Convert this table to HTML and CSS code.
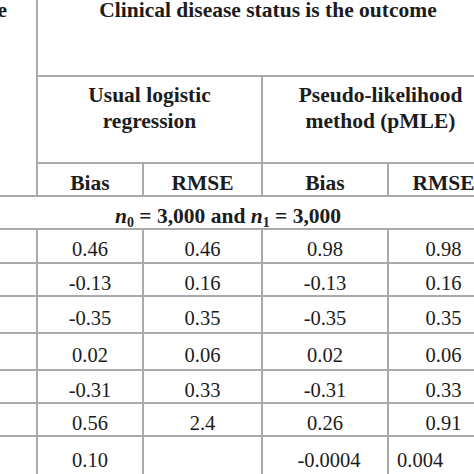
FILE: index.html
```html
<!DOCTYPE html>
<html>
<head>
<meta charset="utf-8">
<link rel="stylesheet" href="styles.css">
</head>
<body>
<table class="tbl">
  <colgroup>
    <col class="c0"><col class="c1"><col class="c2"><col class="c3"><col class="c4">
  </colgroup>
  <tr class="r-h1">
    <th class="lab" rowspan="3"><div class="lab-in">Estimate</div></th>
    <th class="top" colspan="4">Clinical disease status is the outcome</th>
  </tr>
  <tr class="r-h2">
    <th class="method" colspan="2">Usual logistic<br>regression</th>
    <th class="method" colspan="2">Pseudo-likelihood<br>method (pMLE)</th>
  </tr>
  <tr class="r-h3">
    <th class="sub">Bias</th><th class="sub">RMSE</th><th class="sub">Bias</th><th class="sub">RMSE</th>
  </tr>
  <tr class="r-n">
    <td class="span" colspan="5"><i>n</i><sub>0</sub> = 3,000 and <i>n</i><sub>1</sub> = 3,000</td>
  </tr>
  <tr class="r-a"><td></td><td>0.46</td><td>0.46</td><td>0.98</td><td>0.98</td></tr>
  <tr class="r-s"><td></td><td>-0.13</td><td>0.16</td><td>-0.13</td><td>0.16</td></tr>
  <tr class="r-b"><td></td><td>-0.35</td><td>0.35</td><td>-0.35</td><td>0.35</td></tr>
  <tr class="r-b"><td></td><td>0.02</td><td>0.06</td><td>0.02</td><td>0.06</td></tr>
  <tr class="r-s"><td></td><td>-0.31</td><td>0.33</td><td>-0.31</td><td>0.33</td></tr>
  <tr class="r-s"><td></td><td>0.56</td><td>2.4</td><td>0.26</td><td>0.91</td></tr>
  <tr class="r-last"><td></td><td>0.10</td><td></td><td class="wide">-0.0004</td><td class="left">0.004</td></tr>
</table>
</body>
</html>
```
FILE: styles.css
```css
html, body {
  margin: 0;
  padding: 0;
  background: #ffffff;
  overflow: hidden;
}
.tbl {
  border-collapse: collapse;
  table-layout: fixed;
  width: 542px;
  margin-left: -44px;
  margin-top: -6px;
  font-family: "Liberation Serif", "Times New Roman", serif;
  font-size: 20.5px;
  color: #1c1c1c;
}
.c0 { width: 80px; }
.c1 { width: 106px; }
.c2 { width: 119px; }
.c3 { width: 126px; }
.c4 { width: 111px; }
.tbl th, .tbl td {
  border: 2px solid #aaaaaa;
  padding: 0;
  text-align: center;
  font-weight: normal;
}
.tbl th { font-weight: bold; font-size: 21.5px; }
.r-h1 th { border-top: none; }
.r-h1 { height: 82px; }
.r-h1 th { vertical-align: top; padding-top: 5px; line-height: 23px; }
.tbl th.lab { padding-right: 29px; }
.lab-in { display: flex; justify-content: flex-end; white-space: nowrap; }
.r-h2 { height: 87px; }
.r-h2 th { vertical-align: top; padding-top: 5px; line-height: 26px; }
.r-h3 { height: 33px; }
.r-h3 th { vertical-align: middle; padding-top: 6px; line-height: 22px; }
.r-n { height: 33px; }
.r-n td { font-weight: bold; font-size: 21.5px; padding-top: 6px; line-height: 22px; }
.r-n i { font-style: italic; }
.r-n sub { font-size: 14px; vertical-align: -4px; line-height: 0; }
.r-a { height: 34px; }
.r-s { height: 33px; }
.r-b { height: 37px; }
.r-last { height: 40px; }
.r-a td, .r-s td, .r-b td, .r-last td { padding-top: 6px; line-height: 22px; }
.r-last td { vertical-align: top; padding-top: 12px; }
.tbl td.wide { padding-left: 8px; }
.tbl td.left { text-align: left; padding-left: 8px; }
```
